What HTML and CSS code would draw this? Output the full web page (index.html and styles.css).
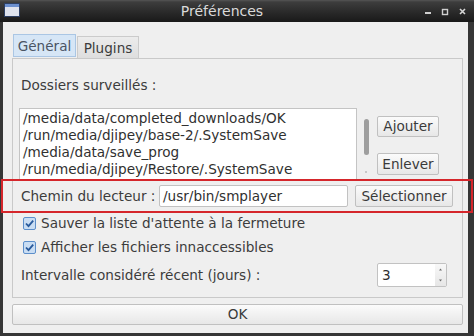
FILE: index.html
```html
<!DOCTYPE html>
<html lang="fr">
<head>
<meta charset="utf-8">
<title>Préférences</title>
<link rel="stylesheet" href="styles.css">
</head>
<body>
<div class="window">
  <div class="titlebar">
    <svg class="winicon" width="16" height="14" viewBox="0 0 16 14">
      <rect x="0.5" y="0.5" width="15" height="13" fill="#dfe3ee" stroke="#2d3f63"/>
      <rect x="1" y="1" width="14" height="3" fill="#6b8fcf"/>
    </svg>
    <div class="title">Préférences</div>
    <svg class="controls" width="46" height="22" viewBox="0 0 46 22">
      <rect x="1" y="12" width="6" height="2" fill="#cfcfcf"/>
      <rect x="18.5" y="9.5" width="5" height="5" fill="none" stroke="#cfcfcf" stroke-width="1.4"/>
      <path d="M36 9 L41 14 M41 9 L36 14" stroke="#d6d6d6" stroke-width="1.6"/>
    </svg>
  </div>
  <div class="client">
    <div class="tabs">
      <div class="tab active">Général</div>
      <div class="tab">Plugins</div>
    </div>
    <div class="panel">
      <div class="label first">Dossiers surveillés :</div>
      <div class="folders">
        <div class="list">
          <div class="item">/media/data/completed_downloads/OK</div>
          <div class="item">/run/media/djipey/base-2/.SystemSave</div>
          <div class="item">/media/data/save_prog</div>
          <div class="item">/run/media/djipey/Restore/.SystemSave</div>
        </div>
        <div class="scrollbar"><div class="thumb"></div><div class="dot"></div></div>
        <div class="side-buttons">
          <div class="btn side">Ajouter</div>
          <div class="btn side second">Enlever</div>
        </div>
      </div>
      <div class="path-row">
        <div class="label path-label">Chemin du lecteur :</div>
        <div class="input">/usr/bin/smplayer</div>
        <div class="btn select">Sélectionner</div>
      </div>
      <div class="check-row first-check">
        <svg class="check" width="13" height="13" viewBox="0 0 13 13">
          <rect x="0.5" y="0.5" width="12" height="12" rx="1.5" fill="#c9ddf3" stroke="#5d8fca"/>
          <path d="M3 6.5 L5.5 9.2 L10.2 3.6" fill="none" stroke="#285a9c" stroke-width="1.8"/>
        </svg>
        <span class="label">Sauver la liste d'attente à la fermeture</span>
      </div>
      <div class="check-row">
        <svg class="check" width="13" height="13" viewBox="0 0 13 13">
          <rect x="0.5" y="0.5" width="12" height="12" rx="1.5" fill="#c9ddf3" stroke="#5d8fca"/>
          <path d="M3 6.5 L5.5 9.2 L10.2 3.6" fill="none" stroke="#285a9c" stroke-width="1.8"/>
        </svg>
        <span class="label">Afficher les fichiers innaccessibles</span>
      </div>
      <div class="interval-row">
        <div class="label">Intervalle considéré récent (jours) :</div>
        <div class="spin">
          <div class="spin-value">3</div>
          <svg class="spin-arrows" width="11" height="22" viewBox="0 0 11 22">
            <path d="M4 6.5 L5.5 4.5 L7 6.5 Z" fill="#6e6e6e"/>
            <path d="M4 15.5 L5.5 17.5 L7 15.5 Z" fill="#6e6e6e"/>
          </svg>
        </div>
      </div>
    </div>
    <div class="btn ok">OK</div>
  </div>
  <div class="highlight"></div>
</div>
</body>
</html>
```

FILE: styles.css
```css
html, body {
  margin: 0;
  padding: 0;
  background: #2b2b2b;
}

.window {
  position: relative;
  width: 474px;
  height: 336px;
  display: flex;
  flex-direction: column;
  background: #363636;
  font-family: "DejaVu Sans", sans-serif;
  font-size: 13.6px;
  color: #3c3c3c;
}

.titlebar {
  height: 22px;
  display: flex;
  align-items: center;
  padding-left: 4px;
  background: linear-gradient(#555 0, #3d3d3d 2px, #2a2a2a 12px, #191919 22px);
}

.winicon {
  display: block;
  margin-top: -2px;
}

.title {
  flex: 1;
  text-align: center;
  color: #dadada;
  font-size: 14px;
  line-height: 22px;
}

.controls {
  display: block;
  margin-right: 4px;
}

.client {
  flex: 1;
  margin: 0 6px 3px 3px;
  padding: 11px 5px 0 9px;
  background: #efefef;
  display: flex;
  flex-direction: column;
}

.tabs {
  display: flex;
  align-items: flex-end;
  height: 25px;
  margin-left: 1px;
}

.tab {
  width: 62px;
  box-sizing: border-box;
  height: 22px;
  line-height: 22px;
  text-align: center;
  border: 1px solid #cbcbcb;
  border-bottom: none;
  background: linear-gradient(#ececec, #dedede);
  color: #3c3c3c;
}

.tab.active {
  width: 63px;
  height: 23px;
  line-height: 23px;
  margin-right: 1px;
  margin-bottom: 1px;
  border: 1px solid #aac6e4;
  background: #d6e6f6;
  color: #4a5463;
}

.panel {
  height: 240px;
  box-sizing: border-box;
  border: 1px solid #c9c9c9;
  background: #efefef;
  padding: 18px 9px 0 6px;
  display: flex;
  flex-direction: column;
}

.label {
  line-height: 17px;
  white-space: nowrap;
}

.panel > .label.first {
  margin-left: 2px;
}

.folders {
  display: flex;
  margin-top: 14px;
  height: 73px;
}

.list {
  width: 338px;
  box-sizing: border-box;
  border: 1px solid #c4c4c4;
  background: #fff;
  padding: 1px 0 0 3px;
  overflow: hidden;
  color: #303030;
}

.item {
  line-height: 17px;
  white-space: nowrap;
}

.scrollbar {
  width: 12px;
  margin-left: 3px;
  display: flex;
  flex-direction: column;
  align-items: center;
}

.thumb {
  width: 5px;
  height: 36px;
  margin-top: 11px;
  border-radius: 3px;
  background: #9e9e9e;
}

.dot {
  width: 2px;
  height: 2px;
  margin-top: 16px;
  background: #c8c8c8;
}

.side-buttons {
  margin-left: 5px;
  padding-top: 8px;
  display: flex;
  flex-direction: column;
}

.btn {
  box-sizing: border-box;
  border: 1px solid #c0c0c0;
  border-radius: 2px;
  background: linear-gradient(#fbfbfb, #e7e7e7);
  text-align: center;
  color: #3a3a3a;
}

.btn.side {
  width: 62px;
  height: 21px;
  line-height: 19px;
}

.btn.side.second {
  height: 22px;
  line-height: 20px;
  margin-top: 16px;
}

.path-row {
  display: flex;
  align-items: center;
  height: 22px;
  margin-top: 4px;
  padding-left: 2px;
}

.path-label {
  width: 138px;
  flex: none;
}

.input {
  flex: 1;
  height: 22px;
  box-sizing: border-box;
  border: 1px solid #c2c2c2;
  border-radius: 2px;
  background: #fff;
  padding-left: 3px;
  line-height: 20px;
  color: #303030;
}

.btn.select {
  width: 98px;
  height: 22px;
  line-height: 20px;
  margin-left: 7px;
}

.check-row {
  display: flex;
  align-items: center;
  height: 24px;
  padding-left: 4px;
}

.check-row.first-check {
  margin-top: 4px;
}

.check {
  display: block;
  margin-right: 5px;
}

.interval-row {
  display: flex;
  align-items: center;
  justify-content: space-between;
  height: 24px;
  margin-top: 4px;
  padding-left: 2px;
}

.spin {
  display: flex;
  width: 70px;
  height: 24px;
  box-sizing: border-box;
  margin-right: 6px;
  border: 1px solid #c2c2c2;
  border-radius: 2px;
  background: #fff;
}

.spin-value {
  flex: 1;
  padding-left: 4px;
  line-height: 22px;
  color: #303030;
}

.spin-arrows {
  display: block;
  background: linear-gradient(#f8f8f8, #e6e6e6);
}

.btn.ok {
  margin-top: 6px;
  height: 21px;
  line-height: 19px;
}

.highlight {
  position: absolute;
  left: 1px;
  right: 1px;
  top: 179px;
  height: 34px;
  box-sizing: border-box;
  border: 2px solid #d5262b;
  pointer-events: none;
}
```
